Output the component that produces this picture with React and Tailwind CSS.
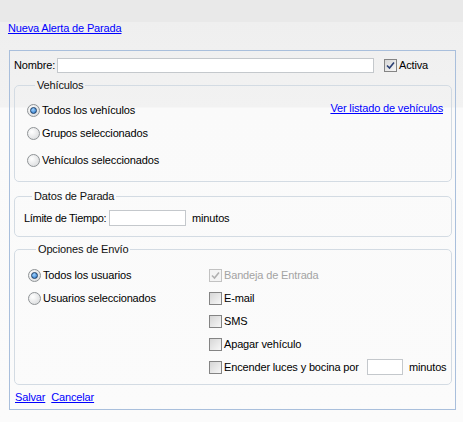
import React from "react";

function Radio({ checked }) {
  return (
    <span className="w-[13px] h-[13px] rounded-full border border-[#8f9396] bg-[radial-gradient(circle_at_35%_35%,#ffffff,#d4d6d8)] flex items-center justify-center shrink-0">
      {checked && (
        <span className="w-[7px] h-[7px] rounded-full border border-[#1d3e66] bg-[radial-gradient(circle_at_40%_35%,#9fd2ff,#1f6fc4)]" />
      )}
    </span>
  );
}

function Check({ checked, disabled }) {
  return (
    <span
      className={
        disabled
          ? "w-[13px] h-[13px] border border-[#c2c2c2] bg-[#f4f4f4] flex items-center justify-center shrink-0"
          : "w-[13px] h-[13px] border border-[#848484] bg-[linear-gradient(135deg,#d6d6d6,#f7f7f7)] flex items-center justify-center shrink-0"
      }
    >
      {checked && (
        <svg width="9" height="9" viewBox="0 0 9 9">
          <path
            d="M1 4.5 L3.5 7 L8 1.5"
            fill="none"
            stroke={disabled ? "#b0b0b0" : "#2a3f73"}
            strokeWidth="1.6"
          />
        </svg>
      )}
    </span>
  );
}

function Box({ title, className, children }) {
  return (
    <fieldset className={"border border-[#d3dbe3] rounded-[5px] " + className}>
      <legend className="ml-[8px] px-[2px] leading-[14px] text-[#111]">{title}</legend>
      {children}
    </fieldset>
  );
}

export default function App() {
  return (
    <div className="w-full min-h-[422px] text-[11px] tracking-[-0.15px] text-black font-['Liberation_Sans',Arial,sans-serif] bg-[linear-gradient(to_bottom,#e9e9e9_0px,#e9e9e9_22px,#efefef_22px,#f2f2f2_107px,#fafafa_108px,#fbfbfb_100%)]">
      <div className="h-[22px]" />
      <div className="h-[28px] pl-[8px] leading-[13px]">
        <a href="#" className="text-[#0000ff] underline">Nueva Alerta de Parada</a>
      </div>

      <div className="ml-[9px] w-[447px] h-[360px] border border-[#a9bfdc] pt-[6px] pl-[4px] pr-[3px]">
        {/* Nombre */}
        <div className="h-[16px] flex items-center">
          <span className="w-[43px] whitespace-nowrap">Nombre:</span>
          <input className="w-[317px] h-[15px] border border-[#c4c8cc] bg-white outline-none" />
          <span className="ml-[10px]">
            <Check checked />
          </span>
          <span className="ml-[2px]">Activa</span>
        </div>

        {/* Vehículos */}
        <Box title="Vehículos" className="mt-[5px] h-[104px] pl-[12px] pr-[8px]">
          <div className="mt-[10px] h-[16px] flex items-center justify-between">
            <div className="flex items-center gap-[2px]">
              <Radio checked />
              <span>Todos los vehículos</span>
            </div>
            <a href="#" className="text-[#0000ff] underline -mt-[3px]">Ver listado de vehículos</a>
          </div>
          <div className="mt-[7px] h-[16px] flex items-center gap-[2px]">
            <Radio />
            <span>Grupos seleccionados</span>
          </div>
          <div className="mt-[11px] h-[16px] flex items-center gap-[2px]">
            <Radio />
            <span>Vehículos seleccionados</span>
          </div>
        </Box>

        {/* Datos de Parada */}
        <Box title="Datos de Parada" className="mt-[7px] h-[48px] pl-[9px]">
          <div className="mt-[7px] h-[16px] flex items-center">
            <span className="w-[85px] whitespace-nowrap tracking-[-0.3px]">Límite de Tiempo:</span>
            <input className="w-[77px] h-[16px] border border-[#c4c8cc] bg-white outline-none" />
            <span className="ml-[6px]">minutos</span>
          </div>
        </Box>

        {/* Opciones de Envío */}
        <Box title="Opciones de Envío" className="mt-[5px] h-[143px] pl-[13px]">
          <div className="mt-[11px] flex">
            <div className="w-[181px] flex flex-col gap-[7px]">
              <div className="h-[16px] flex items-center gap-[2px]">
                <Radio checked />
                <span>Todos los usuarios</span>
              </div>
              <div className="h-[16px] flex items-center gap-[2px]">
                <Radio />
                <span>Usuarios seleccionados</span>
              </div>
            </div>
            <div className="flex flex-col gap-[7px]">
              <div className="h-[16px] flex items-center gap-[2px] text-[#a3a3a3]">
                <Check checked disabled />
                <span>Bandeja de Entrada</span>
              </div>
              <div className="h-[16px] flex items-center gap-[2px]">
                <Check />
                <span>E-mail</span>
              </div>
              <div className="h-[16px] flex items-center gap-[2px]">
                <Check />
                <span>SMS</span>
              </div>
              <div className="h-[16px] flex items-center gap-[2px]">
                <Check />
                <span>Apagar vehículo</span>
              </div>
              <div className="h-[16px] flex items-center gap-[2px]">
                <Check />
                <span className="w-[141px] whitespace-nowrap">Encender luces y bocina por</span>
                <input className="w-[36px] h-[16px] border border-[#c4c8cc] bg-white outline-none" />
                <span className="ml-[4px]">minutos</span>
              </div>
            </div>
          </div>
        </Box>

        {/* Acciones */}
        <div className="mt-[5px] h-[14px] flex items-center gap-[6px] pl-[1px]">
          <a href="#" className="text-[#0000ff] underline">Salvar</a>
          <a href="#" className="text-[#0000ff] underline">Cancelar</a>
        </div>
      </div>
    </div>
  );
}
